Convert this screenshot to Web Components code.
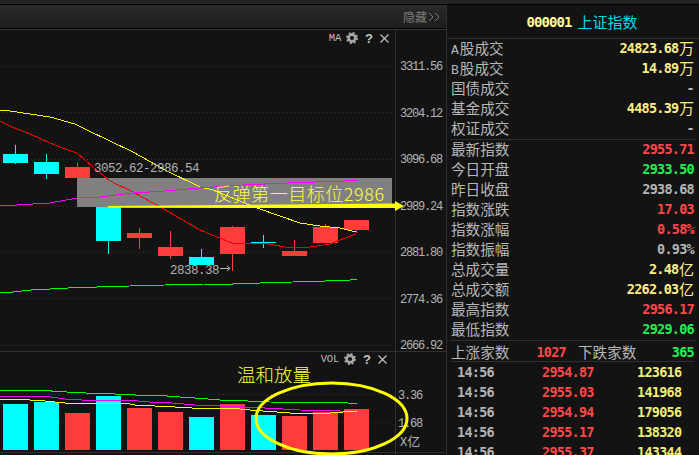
<!DOCTYPE html>
<html lang="zh">
<head>
<meta charset="utf-8">
<title>000001 上证指数</title>
<style>
html,body{margin:0;padding:0;background:#131313;overflow:hidden}
body{width:699px;height:455px}
</style>
</head>
<body>
<quote-app>
  <chart-header slot="left"></chart-header>
  <kline-pane slot="left"><pane-tools name="MA" style="--r:6px;--t:2px"></pane-tools></kline-pane>
  <vol-pane slot="left"><pane-tools name="VOL" style="--r:8px;--t:0px"></pane-tools></vol-pane>
  <quote-panel slot="right" code="000001" title="上证指数">
    <quote-section>
      <quote-row label="A股成交" value="24823.68" unit="万" tone="y"></quote-row>
      <quote-row label="B股成交" value="14.89" unit="万" tone="y"></quote-row>
      <quote-row label="国债成交" value="-" tone="g"></quote-row>
      <quote-row label="基金成交" value="4485.39" unit="万" tone="y"></quote-row>
      <quote-row label="权证成交" value="-" tone="g"></quote-row>
    </quote-section>
    <quote-section>
      <quote-row label="最新指数" value="2955.71" tone="r"></quote-row>
      <quote-row label="今日开盘" value="2933.50" tone="n"></quote-row>
      <quote-row label="昨日收盘" value="2938.68" tone="g"></quote-row>
      <quote-row label="指数涨跌" value="17.03" tone="r"></quote-row>
      <quote-row label="指数涨幅" value="0.58%" tone="r"></quote-row>
      <quote-row label="指数振幅" value="0.93%" tone="g"></quote-row>
      <quote-row label="总成交量" value="2.48" unit="亿" tone="y"></quote-row>
      <quote-row label="总成交额" value="2262.03" unit="亿" tone="y"></quote-row>
      <quote-row label="最高指数" value="2956.17" tone="r"></quote-row>
      <quote-row label="最低指数" value="2929.06" tone="n"></quote-row>
    </quote-section>
    <breadth-row up="1027" down="365"></breadth-row>
    <tick-row time="14:56" price="2954.87" vol="123616"></tick-row>
    <tick-row time="14:56" price="2955.03" vol="141968"></tick-row>
    <tick-row time="14:56" price="2954.94" vol="179056"></tick-row>
    <tick-row time="14:56" price="2955.17" vol="138320"></tick-row>
    <tick-row time="14:56" price="2955.37" vol="143344"></tick-row>
  </quote-panel>
</quote-app>
<script>
const CJK = '"Noto Sans CJK SC","Noto Sans",sans-serif';
const MONO = '"Liberation Mono",monospace';
const NUM = '"DejaVu Sans Mono","Liberation Mono",monospace';
const NUMFONT = `bold 13.5px ${NUM}`;
const NUMLS = '-.75px';
const CYAN = '#00ffff', RED = '#ff3c3c';
const poly = (pts, c, w=1) => `<polyline points="${pts.map(p=>p.join(',')).join(' ')}" fill="none" stroke="${c}" stroke-width="${w}" shape-rendering="crispEdges"/>`;
const dots = (y) => `<line x1="3" x2="393" y1="${y}" y2="${y}" stroke="#363636" stroke-width="1" stroke-dasharray="1 3" shape-rendering="crispEdges"/>`;
const axisText = (y, t, x=400) => `<text x="${x}" y="${y+4}" font-family='${MONO}' font-size="12" letter-spacing="-1.2" fill="#b4b4b4">${t}</text>`;

class QuoteApp extends HTMLElement {
  constructor(){super();this.attachShadow({mode:'open'}).innerHTML=`<style>
    :host{display:flex;flex-direction:column;width:699px;height:455px;background:#131313;overflow:hidden}
    .strip{height:4px;background:#242424;border-bottom:1px solid #000;flex:none}
    .main{display:flex;flex:1;min-height:0}
    .left{width:446px;flex:none;display:flex;flex-direction:column;border-right:1px solid #2e2e2e}
    .right{flex:1;min-width:0;display:flex}
  </style><div class="strip"></div><div class="main"><div class="left"><slot name="left"></slot></div><div class="right"><slot name="right"></slot></div></div>`;}
}
class ChartHeader extends HTMLElement {
  constructor(){super();this.attachShadow({mode:'open'}).innerHTML=`<style>
    :host{display:flex;flex:none;height:23px;align-items:center;justify-content:flex-end;padding-right:5px;position:relative;z-index:1;
      background:linear-gradient(#2a2a2a,#1d1d1d);border-bottom:1px solid #000;box-shadow:0 1px 0 #333;
      font:12px ${CJK};color:#7c7c7c}
    svg{display:block;margin-left:1px}
  </style><span>隐藏</span><svg width="13" height="10" viewBox="0 0 13 10" fill="none" stroke="#777" stroke-width="1"><path d="M1 1l4 4-4 4M7 1l4 4-4 4"/></svg>`;}
}
class PaneTools extends HTMLElement {
  constructor(){super();const n=this.getAttribute('name');this.attachShadow({mode:'open'}).innerHTML=`<style>
    :host{position:absolute;top:var(--t,2px);right:calc(51px + var(--r,7px));display:flex;align-items:center;height:14px;color:#bdbdbd;font:bold 11px ${MONO}}
    .n{font-weight:normal;font-size:10.5px;letter-spacing:-.2px;margin-right:5px}
    .q{font:bold 13px "Liberation Sans",sans-serif;margin:0 7px 0 7px;color:#c4c4c4}
    svg{display:block}
  </style><span class="n">${n}</span>
  <svg width="12" height="12" viewBox="0 0 12 12"><circle cx="6" cy="6" r="3.4" fill="none" stroke="#a8a8a8" stroke-width="2.6"/><circle cx="6" cy="6" r="5" fill="none" stroke="#a8a8a8" stroke-width="2" stroke-dasharray="2 1.93"/></svg>
  <span class="q">?</span>
  <svg width="9" height="9" viewBox="0 0 9 9" stroke="#c4c4c4" stroke-width="1.1"><path d="M.5 .5l8 8M8.5 .5l-8 8"/></svg>`;}
}
class KlinePane extends HTMLElement {
  constructor(){super();
    const c=[
      [3,CYAN,154,163,145,164],[34,CYAN,162,174,154,179],[65,RED,167,178,163,178],[96,CYAN,207,241,207,254],
      [127,RED,233,238,228,249],[158,RED,247,256,231,259],[189,CYAN,257,265,249,265],[220,RED,227,254,226,271],
      [251,CYAN,242,243,235,248],[282,RED,251,256,240,256],[313,RED,227,243,224,243],[344,RED,220,230,220,233]];
    const candles=c.map(([x,col,t,b,wt,wb])=>`<rect x="${x}" y="${t}" width="25" height="${b-t}" fill="${col}"/><rect x="${x+12}" y="${wt}" width="1" height="${wb-wt}" fill="${col}"/>`).join('');
    const grid=[66,112,159,206,252,298,345].map(dots).join('');
    const axis=[[66,'3311.56'],[113,'3204.12'],[159,'3096.68'],[206,'2989.24'],[252,'2881.80'],[299,'2774.36'],[345,'2666.92']].map(a=>axisText(a[0],a[1])).join('');
    const yellow=[[0,110],[10,111],[30,114],[50,117],[75,124],[87,130],[110,141],[133,152],[165,170],[200,187],[213,190],[235,199],[257,208],[280,216],[300,223],[320,226],[340,228],[356,232]];
    const red=[[0,121],[12,127],[30,134],[50,143],[65,149],[77,153],[93,167],[110,181],[133,192],[162,208],[200,230],[232,243],[263,243],[285,247],[310,247],[330,244],[345,238],[356,234]];
    const magenta=[[0,206],[17,205],[50,203],[77,198],[100,197],[133,193],[165,191],[200,188],[243,185],[287,183],[343,181],[357,180]];
    const green=[[0,292],[13,292],[31,290],[50,289],[68,288],[97,287],[130,286],[165,285],[204,284],[233,284],[260,283],[293,282],[325,281],[350,280],[357,279]];
    this.attachShadow({mode:'open'}).innerHTML=`<style>
      :host{display:block;position:relative;flex:none;height:322px;border-bottom:1px solid #303030}
      svg{display:block}
    </style><svg width="445" height="322" viewBox="0 29 445 322">
      <line x1="395.5" x2="395.5" y1="29" y2="351" stroke="#303030"/>
      ${grid}${axis}${candles}
      <rect x="77" y="178" width="315" height="29" fill="#808080"/>
      ${poly(yellow,'#ffff00')}${poly(red,'#f00000')}${poly(magenta,'#ff00ff')}${poly(green,'#00ff00')}
      <polygon points="108,206 395,203.5 395,201 404,206 395,211 395,208 108,207.8" fill="#ffff00"/>
      <text x="94" y="172" font-family='${MONO}' font-size="12.5" letter-spacing="-.5" fill="#b4b4b4">3052.62-2986.54</text>
      <text x="170" y="274" font-family='${MONO}' font-size="12.5" letter-spacing="-.5" fill="#b4b4b4">2838.38</text>
      <path d="M220 268.5h10M227 266l3 2.5-3 2.5" fill="none" stroke="#b4b4b4"/>
      <text x="214" y="201" font-family='${CJK}' font-size="18" letter-spacing=".55" font-weight="300" fill="#ffff3c">反弹第一目标位2986</text>
    </svg><slot></slot>`;}
}
class VolPane extends HTMLElement {
  constructor(){super();
    const b=[[3,CYAN,404],[34,CYAN,402],[65,RED,413],[96,CYAN,396],[127,RED,408],[158,RED,412],[189,CYAN,417],[220,RED,404],[251,CYAN,415],[282,RED,416],[313,RED,412],[344,RED,409]];
    const bars=b.map(([x,c,t])=>`<rect x="${x}" y="${t}" width="25" height="${450-t}" fill="${c}"/>`).join('');
    const green=[[0,390],[51,390],[51,391],[67,392],[86,393],[115,394],[135,395],[153,395],[180,397],[195,398],[220,400],[248,401],[270,402],[348,403],[357,404]];
    const magenta=[[0,396],[25,396],[50,397],[65,399],[82,400],[125,400],[150,402],[172,403],[195,405],[220,406],[265,408],[300,410],[340,411],[357,411]];
    const yellow=[[0,399],[13,399],[30,400],[45,401],[55,402],[65,403],[85,404],[105,403],[125,403],[135,405],[155,406],[175,407],[192,408],[215,409],[230,408],[250,410],[290,413],[330,413],[357,411]];
    this.attachShadow({mode:'open'}).innerHTML=`<style>
      :host{display:block;position:relative;flex:1;min-height:0;overflow:hidden}
      svg{display:block}
    </style><svg width="445" height="103" viewBox="0 352 445 103">
      <line x1="395.5" x2="395.5" y1="352" y2="455" stroke="#303030"/>
      <line x1="0" x2="445" y1="452.5" y2="452.5" stroke="#303030"/>
      ${dots(394)}${dots(422)}
      ${axisText(395,'3.36',398)}${axisText(423,'1.68',398)}
      <text x="400" y="446" font-family='${MONO}' font-size="12" fill="#b4b4b4">X<tspan font-family='${CJK}' font-size="13">亿</tspan></text>
      ${bars}
      ${poly(green,'#00ff00')}${poly(magenta,'#ff00ff')}${poly(yellow,'#ffff00')}
      <ellipse cx="331.5" cy="418.5" rx="75.5" ry="35.5" fill="none" stroke="#ffff00" stroke-width="3"/>
      <text x="237" y="382" font-family='${CJK}' font-size="18.5" font-weight="300" fill="#ffff3c">温和放量</text>
    </svg><slot></slot>`;}
}
class QuotePanel extends HTMLElement {
  constructor(){super();this.attachShadow({mode:'open'}).innerHTML=`<style>
    :host{display:flex;flex-direction:column;flex:1;min-width:0;overflow:hidden}
    .t{flex:none;height:33px;border-bottom:1px solid #303030;display:flex;align-items:center;justify-content:center;gap:6px;padding-left:18px;padding-bottom:0;box-sizing:content-box}
    .c{font:bold 14px ${NUM};letter-spacing:-.9px;color:#ffff99}
    .n{font:15px ${CJK};color:#00d8f0}
  </style><div class="t"><span class="c">${this.getAttribute('code')}</span><span class="n">${this.getAttribute('title')}</span></div><slot></slot>`;}
}
class QuoteSection extends HTMLElement {
  constructor(){super();this.attachShadow({mode:'open'}).innerHTML=`<style>
    :host{display:block;flex:none;margin:0 4px 0 3px;border-bottom:1px solid #303030}
  </style><slot></slot>`;}
}
const TONES={y:'#ffee88',r:'#ff4848',n:'#22ee55',g:'#b4b4b4'};
class QuoteRow extends HTMLElement {
  constructor(){super();const v=this.getAttribute('value'),u=this.getAttribute('unit'),t=this.getAttribute('tone');
    let l=this.getAttribute('label');
    const latin=/^[AB]/.test(l);
    if(latin) l=`<i>${l[0]}</i>${l.slice(1)}`;
    this.attachShadow({mode:'open'}).innerHTML=`<style>
    :host{display:flex;height:20px;align-items:center;justify-content:space-between;padding:0 1px 3px 1px;box-sizing:border-box}
    .l{font:14.6px ${CJK};color:#b8b8b8;white-space:nowrap}
    i{font:normal 13px ${MONO};margin-right:1px}
    .v{font:${NUMFONT};letter-spacing:${NUMLS};color:${TONES[t]};display:flex;align-items:center}
    .u{font:normal 15px ${CJK};letter-spacing:0;color:${TONES[t]};margin-left:.5px}
  </style><span class="l">${l}</span><span class="v">${v}${u?`<span class="u">${u}</span>`:''}</span>`;}
}
class BreadthRow extends HTMLElement {
  constructor(){super();this.attachShadow({mode:'open'}).innerHTML=`<style>
    :host{display:grid;grid-template-columns:115px 71px 1fr;flex:none;height:20px;align-items:center;margin:0 5px 0 4px;padding-bottom:3px;box-sizing:border-box;font:14.6px ${CJK};color:#b8b8b8;white-space:nowrap;box-shadow:0 1px 0 #303030;margin-bottom:1px}
    .a{display:flex;justify-content:space-between;align-items:center}
    .b{text-align:right}
    b{font:${NUMFONT};letter-spacing:${NUMLS}}
    .r{color:${TONES.r}}.g{color:${TONES.n}}
    .m{margin-left:12px}
  </style><span class="a"><span>上涨家数</span><b class="r">${this.getAttribute('up')}</b></span><span class="m">下跌家数</span><b class="b g">${this.getAttribute('down')}</b>`;}
}
class TickRow extends HTMLElement {
  constructor(){super();this.attachShadow({mode:'open'}).innerHTML=`<style>
    :host{display:grid;grid-template-columns:85px 95px 47px;flex:none;height:20px;align-items:center;padding:0 0 1px 10px;box-sizing:border-box;font:${NUMFONT};letter-spacing:${NUMLS};white-space:nowrap}
    .a{color:#b4b4b4}.b{color:${TONES.r}}.c{color:#eeee77}
  </style><span class="a">${this.getAttribute('time')}</span><span class="b">${this.getAttribute('price')}</span><span class="c">${this.getAttribute('vol')}</span>`;}
}
customElements.define('quote-app',QuoteApp);
customElements.define('chart-header',ChartHeader);
customElements.define('pane-tools',PaneTools);
customElements.define('kline-pane',KlinePane);
customElements.define('vol-pane',VolPane);
customElements.define('quote-panel',QuotePanel);
customElements.define('quote-section',QuoteSection);
customElements.define('quote-row',QuoteRow);
customElements.define('breadth-row',BreadthRow);
customElements.define('tick-row',TickRow);
</script>
</body>
</html>
